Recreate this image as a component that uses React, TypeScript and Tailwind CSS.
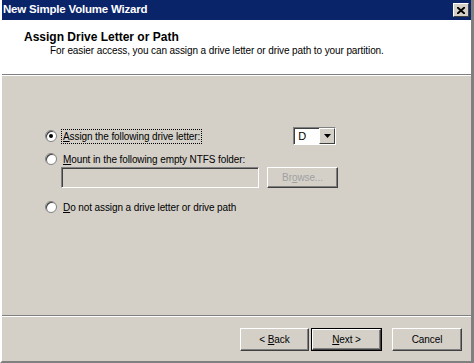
import React, { useState } from 'react';

// Classic Windows-style wizard dialog: "Assign Drive Letter or Path"

const font = { fontFamily: '"Liberation Sans", Arial, sans-serif' };

function Radio({ checked, onClick }: { checked: boolean; onClick: () => void }) {
    return (
        <span
            onClick={onClick}
            className="relative inline-block w-[12px] h-[12px] rounded-full bg-white border border-[#808080] shadow-[inset_1px_1px_0_#404040] shrink-0"
        >
            {checked && <span className="absolute left-[3px] top-[3px] w-[4px] h-[4px] rounded-full bg-black" />}
        </span>
    );
}

function Btn({ children, def, disabled, w = 'w-[70px]', h = 'h-[23px]' }: { children: React.ReactNode; def?: boolean; disabled?: boolean; w?: string; h?: string }) {
    return (
        <div className={`${w} ${h} ${def ? 'border border-black' : ''}`}>
            <button
                className={`w-full h-full bg-[#d4d0c8] text-[10px] tracking-[-0.1px] border border-t-white border-l-white border-r-[#404040] border-b-[#404040] shadow-[inset_-1px_-1px_0_#808080] ${disabled ? 'text-[#a0a0a0]' : 'text-black'}`}
            >
                {children}
            </button>
        </div>
    );
}

export default function App() {
    const [choice, setChoice] = useState('letter');

    return (
        <div style={font} className="w-[474px] h-[363px] bg-[#d4d0c8] flex flex-col border-r-[3px] border-r-[#808080] border-b-[2px] border-b-[#808080] border-l-2 border-l-white text-[10px] tracking-[-0.1px] text-black overflow-hidden">
            {/* title bar */}
            <div className="h-[20px] bg-[#0a246a] flex items-center justify-between pl-[1px] pr-[2px]">
                <span className="text-white font-bold text-[11.5px] tracking-[-0.2px]">New Simple Volume Wizard</span>
                <button className="w-[16px] h-[14px] bg-[#d4d0c8] border border-t-white border-l-white border-r-[#404040] border-b-[#404040] flex items-center justify-center">
                    <svg width="8" height="7" viewBox="0 0 8 7">
                        <path d="M0 0 L8 7 M8 0 L0 7" stroke="black" strokeWidth="2" />
                    </svg>
                </button>
            </div>

            {/* header */}
            <div className="h-[55px] bg-white border-b border-b-[#808080] pl-[22px] pt-[10px]">
                <div className="font-bold text-[12px] tracking-normal leading-[14px]">Assign Drive Letter or Path</div>
                <div className="pl-[26px] leading-[14px]">For easier access, you can assign a drive letter or drive path to your partition.</div>
            </div>
            <div className="h-px bg-white" />

            {/* body */}
            <div className="flex-1 pl-[43px] pt-[50px]">
                <div className="flex items-center h-[20px]">
                    <Radio checked={choice === 'letter'} onClick={() => setChoice('letter')} />
                    <span className="ml-[4px] px-[1px] border border-dotted border-black leading-[13px]">
                        <u>A</u>ssign the following drive letter:
                    </span>
                    <div className="ml-[91px] w-[43px] h-[18px] bg-white border border-t-[#808080] border-l-[#808080] border-r-white border-b-white flex">
                        <div className="flex-1 flex items-center pl-[3px] text-[11px] border-t border-l border-t-[#404040] border-l-[#404040]">D</div>
                        <div className="w-[16px] bg-[#d4d0c8] border border-t-white border-l-white border-r-[#404040] border-b-[#404040] flex items-center justify-center">
                            <svg width="7" height="4" viewBox="0 0 7 4"><path d="M0 0 H7 L3.5 4 Z" fill="black" /></svg>
                        </div>
                    </div>
                </div>

                <div className="flex items-center h-[16px] mt-[5px]">
                    <Radio checked={choice === 'folder'} onClick={() => setChoice('folder')} />
                    <span className="ml-[6px]"><u>M</u>ount in the following empty NTFS folder:</span>
                </div>
                <div className="flex items-center mt-[0px] ml-[16px]">
                    <div className="w-[198px] h-[21px] bg-[#d4d0c8] border border-t-[#808080] border-l-[#808080] border-r-white border-b-white shadow-[inset_1px_1px_0_#404040]" />
                    <div className="ml-[8px]">
                        <Btn disabled w="w-[71px]" h="h-[21px]">Br<u>o</u>wse...</Btn>
                    </div>
                </div>

                <div className="flex items-center h-[16px] mt-[11px]">
                    <Radio checked={choice === 'none'} onClick={() => setChoice('none')} />
                    <span className="ml-[6px]"><u>D</u>o not assign a drive letter or drive path</span>
                </div>
            </div>

            {/* footer */}
            <div className="h-px bg-[#808080]" />
            <div className="h-px bg-white" />
            <div className="h-[44px] flex items-start justify-end pt-[11px] pr-[9px]">
                <Btn w="w-[69px]">&lt; <u>B</u>ack</Btn>
                <div className="ml-[2px]">
                    <Btn def w="w-[71px]"><u>N</u>ext &gt;</Btn>
                </div>
                <div className="ml-[10px]">
                    <Btn>Cancel</Btn>
                </div>
            </div>
        </div>
    );
}
